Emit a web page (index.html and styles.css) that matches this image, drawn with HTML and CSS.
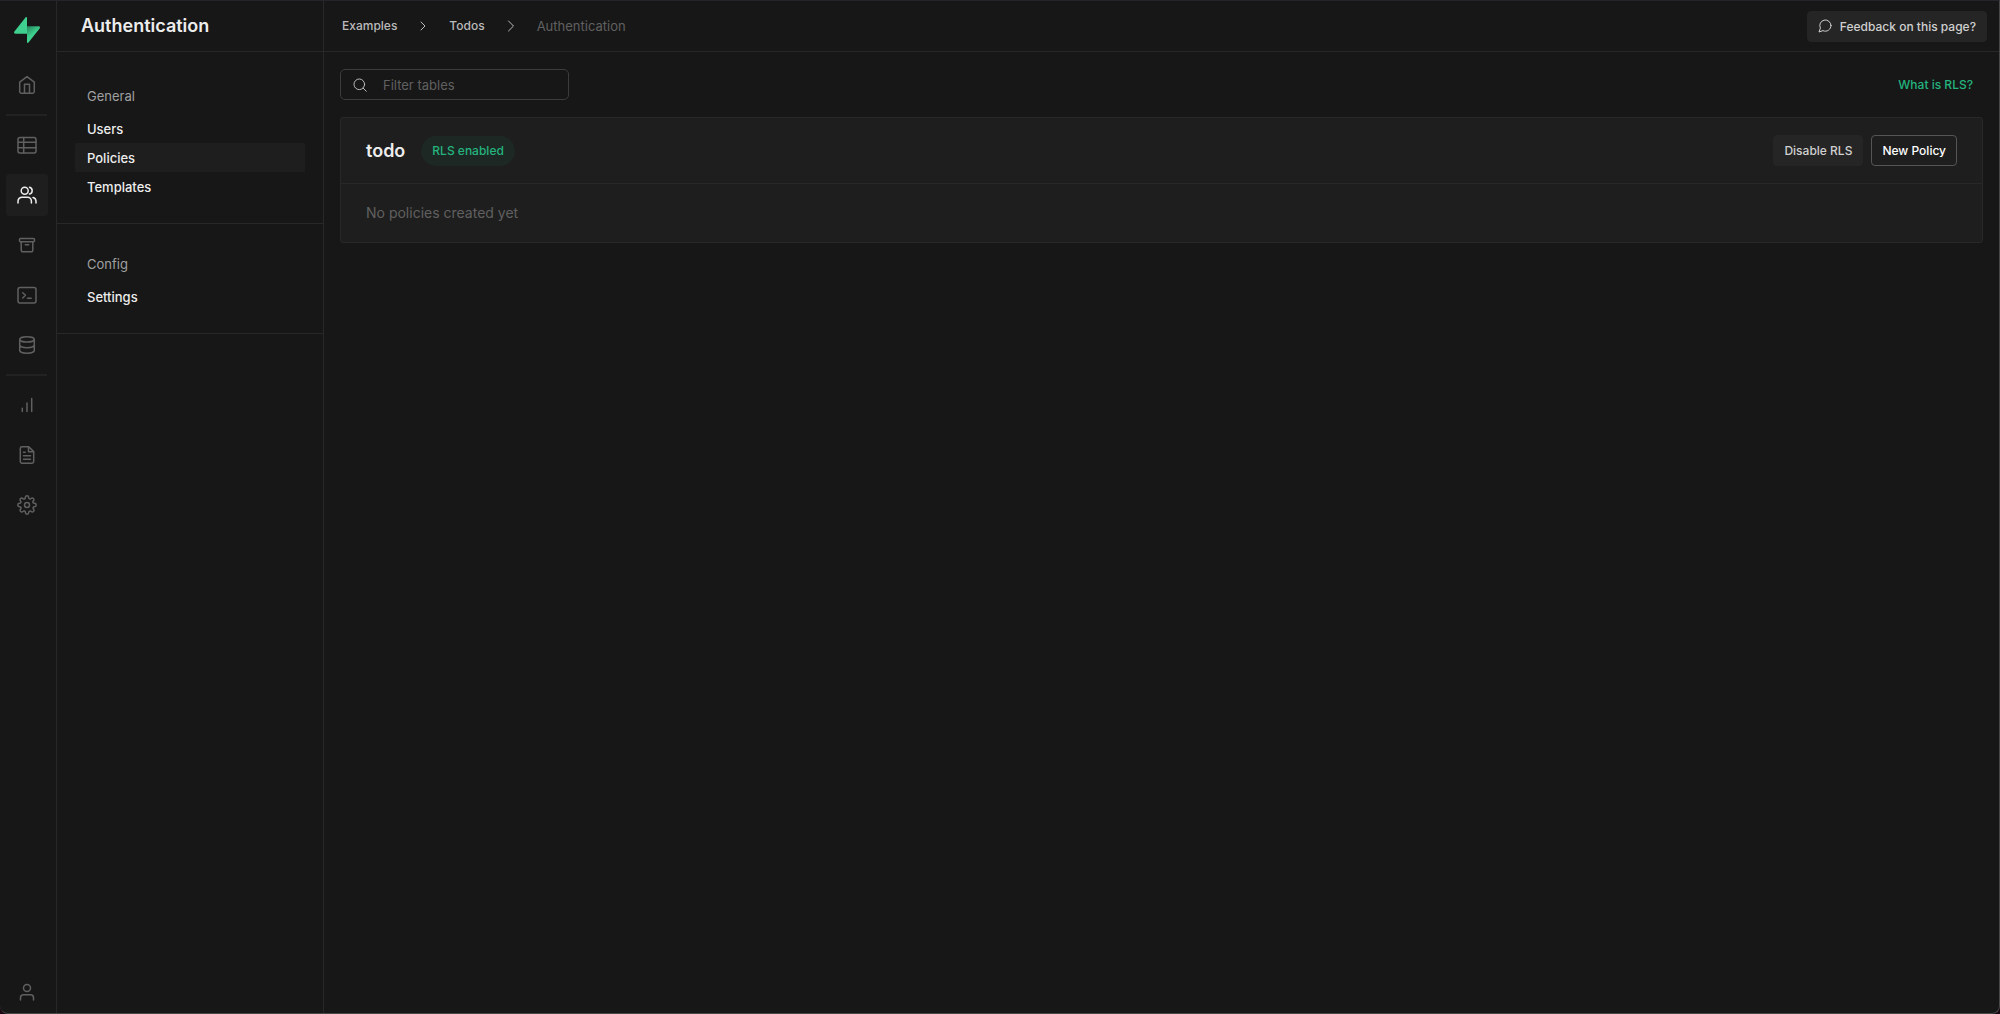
FILE: index.html
```html
<!DOCTYPE html>
<html lang="en">
<head>
  <meta charset="UTF-8" />
  <meta name="viewport" content="width=device-width, initial-scale=1" />
  <title>Authentication | Todos</title>
  <link rel="stylesheet" href="styles.css">
</head>
<body>
  <div class="app">

    <nav class="rail" aria-label="Project">
      <a href="#" class="rail-logo" aria-label="Dashboard">
        <svg viewBox="0 0 26 26" width="26" height="26">
          <defs>
            <linearGradient id="bolt" x1="13" y1="9" x2="19" y2="17" gradientUnits="userSpaceOnUse">
              <stop offset="0" stop-color="#248158" />
              <stop offset="1" stop-color="#3ecf8e" />
            </linearGradient>
          </defs>
          <path fill="#3fcf8e" d="M11.5.5C12.100-.2 13-.1 13 .8V16.700H1.300C.2 16.700-.3 15.500.4 14.600Z" />
          <path fill="url(#bolt)" d="M14.500 25.500C13.900 26.200 13 26 13 25.200V9.300H24.700C25.800 9.300 26.300 10.500 25.600 11.400Z" />
        </svg>
      </a>
      <a href="#" class="rail-link" aria-label="Home">
        <svg class="icon" viewBox="0 0 20 20"><path d="M2.700 7.200 10 1.700l7.300 5.500v9.300a1.700 1.700 0 0 1-1.700 1.700H4.400a1.700 1.700 0 0 1-1.700-1.700zM7.500 18V9.300h5V18" /></svg>
      </a>
      <hr class="rail-divider">
      <a href="#" class="rail-link" aria-label="Table editor">
        <svg class="icon" viewBox="0 0 20 20"><rect x="1" y="2.500" width="18" height="15.500" rx="2" /><path d="M1 7.300h18M1 12.700h18M6.700 2.500V18" /></svg>
      </a>
      <a href="#" class="rail-link active" aria-label="Authentication">
        <svg class="icon" viewBox="0 0 20 20"><circle cx="7.700" cy="5.700" r="3.500" /><path d="M1 18v-1.800a4 4 0 0 1 4-4h5.400a4 4 0 0 1 4 4V18M12.500 2.300a3.500 3.500 0 0 1 0 6.800M19 18v-1.800a4 4 0 0 0-3-3.800" /></svg>
      </a>
      <a href="#" class="rail-link" aria-label="Storage">
        <svg class="icon" viewBox="0 0 20 20"><rect x="2.500" y="3.500" width="15" height="3.300" rx="1" /><path d="M4.200 6.800v8.500a1.500 1.500 0 0 0 1.500 1.500h8.600a1.500 1.500 0 0 0 1.500-1.500V6.800M8.300 9.800h3.400" /></svg>
      </a>
      <a href="#" class="rail-link" aria-label="SQL editor">
        <svg class="icon" viewBox="0 0 20 20"><rect x="1" y="2.500" width="18" height="15.500" rx="2" /><path d="m5.700 7.700 2.800 2.600-2.800 2.700M10.500 13.300h3.700" /></svg>
      </a>
      <a href="#" class="rail-link" aria-label="Database">
        <svg class="icon" viewBox="0 0 20 20"><ellipse cx="10" cy="4.400" rx="7.300" ry="2.700" /><path d="M2.700 4.400v11.200c0 1.500 3.300 2.700 7.300 2.700s7.300-1.200 7.300-2.700V4.400M2.700 10c0 1.500 3.300 2.700 7.300 2.700s7.300-1.200 7.300-2.700" /></svg>
      </a>
      <hr class="rail-divider">
      <a href="#" class="rail-link" aria-label="Reports">
        <svg class="icon" viewBox="0 0 20 20"><path d="M5.300 16.500v-3.300M10 16.500V8M14.700 16.500v-13" /></svg>
      </a>
      <a href="#" class="rail-link" aria-label="API docs">
        <svg class="icon" viewBox="0 0 20 20"><path d="M11.800 1.700H5a1.700 1.700 0 0 0-1.700 1.700v13.200A1.700 1.700 0 0 0 5 18.300h10a1.700 1.700 0 0 0 1.700-1.700v-10zM11.500 2v4.800h5M6.500 7.300h1.700M6.500 10.800h7M6.500 14.200h7" /></svg>
      </a>
      <a href="#" class="rail-link" aria-label="Project settings">
        <svg class="icon icon-gear" viewBox="0 0 24 24"><circle cx="12" cy="12" r="3" /><path d="M19.400 15a1.650 1.650 0 0 0 .33 1.820l.06.06a2 2 0 1 1-2.830 2.830l-.06-.06a1.650 1.650 0 0 0-2.820 1.170V21a2 2 0 0 1-4 0v-.09A1.650 1.650 0 0 0 7.200 19.700l-.06.06a2 2 0 1 1-2.830-2.830l.06-.06A1.650 1.650 0 0 0 3.200 14H3a2 2 0 0 1 0-4h.09A1.650 1.650 0 0 0 4.300 7.200l-.06-.06a2 2 0 1 1 2.830-2.830l.06.06A1.650 1.650 0 0 0 10 3.200V3a2 2 0 0 1 4 0v.09a1.650 1.650 0 0 0 2.820 1.170l.06-.06a2 2 0 1 1 2.830 2.830l-.06.06A1.650 1.650 0 0 0 20.800 10H21a2 2 0 0 1 0 4h-.09a1.650 1.650 0 0 0-1.510 1z" /></svg>
      </a>
      <a href="#" class="rail-link rail-account" aria-label="Account">
        <svg class="icon" viewBox="0 0 20 20"><circle cx="10" cy="6" r="3.500" /><path d="M3.500 18v-2.200a3 3 0 0 1 3-3h7a3 3 0 0 1 3 3V18" /></svg>
      </a>
    </nav>

    <aside class="sidebar">
      <header class="sidebar-header">
        <h1>Authentication</h1>
      </header>
      <nav class="menu" aria-label="Authentication">
        <section class="menu-group">
          <h2>General</h2>
          <a href="#" class="menu-link">Users</a>
          <a href="#" class="menu-link active">Policies</a>
          <a href="#" class="menu-link">Templates</a>
        </section>
        <section class="menu-group">
          <h2>Config</h2>
          <a href="#" class="menu-link">Settings</a>
        </section>
      </nav>
    </aside>

    <div class="content">
      <header class="topbar">
        <nav class="breadcrumbs" aria-label="Breadcrumb">
          <a href="#">Examples</a>
          <svg class="chevron" viewBox="0 0 16 16"><path d="m6 4 4 4-4 4" /></svg>
          <a href="#">Todos</a>
          <svg class="chevron" viewBox="0 0 16 16"><path d="m5.500 3 5 5-5 5" /></svg>
          <span class="current">Authentication</span>
        </nav>
        <button type="button" class="btn">
          <svg viewBox="0 0 14 14" width="14" height="14"><path d="M13 6.600a5.500 5.500 0 0 1-8 5L1 13l1.400-3.900A5.600 5.600 0 1 1 13 6.600z" /></svg>
          Feedback on this page?
        </button>
      </header>

      <main class="page">
        <div class="toolbar">
          <label class="search">
            <svg viewBox="0 0 14 14" width="14" height="14"><circle cx="6.300" cy="6.300" r="5.300" /><path d="m10.200 10.200 3.100 3.100" /></svg>
            <input type="text" placeholder="Filter tables" aria-label="Filter tables">
          </label>
          <a href="#" class="help-link">What is RLS?</a>
        </div>

        <section class="card">
          <header class="card-header">
            <h2>todo</h2>
            <span class="badge">RLS enabled</span>
            <div class="card-actions">
              <button type="button" class="btn">Disable RLS</button>
              <button type="button" class="btn btn-outline">New Policy</button>
            </div>
          </header>
          <p class="card-empty">No policies created yet</p>
        </section>
      </main>
    </div>

  </div>
</body>
</html>
```

FILE: styles.css
```css
:root {
  --bg: #171717;
  --bg-panel: #1e1e1e;
  --bg-button: #252525;
  --border: #282828;
  --text: #ededed;
  --text-light: #a0a0a0;
  --text-muted: #606060;
  --green: #24b47e;
  --font-family: Inter, "Liberation Sans", sans-serif;
}

* { box-sizing: border-box; }

body {
  margin: 0;
  background-color: #1c0812;
  color: var(--text);
  font-family: var(--font-family);
  font-size: 13px;
  line-height: 20px;
}

h1, h2, p {
  margin: 0;
  font-weight: 600;
}

a {
  color: inherit;
  text-decoration: none;
}

svg {
  flex: none;
  fill: none;
  stroke: currentColor;
  stroke-linecap: round;
  stroke-linejoin: round;
}

.app {
  display: flex;
  min-height: 100vh;
  background-color: var(--bg);
  border: 1px solid #484848;
  border-top-color: #24242c;
  border-left: none;
  border-radius: 0 0 8px 8px;
}

/* icon rail */
.rail {
  display: flex;
  flex-direction: column;
  gap: 8px;
  width: 57px;
  padding: 0 8px 0 6px;
  border-right: 1px solid var(--border);
}

.rail-logo {
  display: flex;
  justify-content: center;
  align-items: end;
  width: 42px;
  height: 42px;
  margin-bottom: 13px;
}

.rail-logo svg { stroke: none; }

.rail-link {
  display: flex;
  justify-content: center;
  align-items: center;
  width: 42px;
  height: 42px;
  border-radius: 4px;
  color: #606060;
}

.rail-link.active {
  background-color: var(--bg-panel);
  color: var(--text);
}

.rail-divider {
  width: 41px;
  height: 2px;
  margin: 0;
  border: none;
  background-color: #222;
}

.rail-account { margin-top: auto; }

.icon {
  width: 20px;
  height: 20px;
  stroke-width: 1.5;
}

.icon-gear { stroke-width: 1.8; }

/* section menu */
.sidebar {
  width: 267px;
  border-right: 1px solid var(--border);
}

.sidebar-header,
.topbar {
  display: flex;
  align-items: center;
  height: 51px;
  border-bottom: 1px solid var(--border);
}

.sidebar-header { padding: 0 24px; }

.sidebar-header h1 { font-size: 18px; }

.menu { padding-top: 4px; }

.menu-group {
  padding: 30px 18px 22px;
  border-bottom: 1px solid var(--border);
}

.menu-group h2 {
  margin-bottom: 8px;
  padding: 0 12px;
  color: var(--text-light);
  font-size: 13px;
  font-weight: 400;
}

.menu-link {
  display: flex;
  align-items: center;
  height: 29px;
  padding: 0 12px;
  border-radius: 2px;
  font-weight: 500;
}

.menu-link.active { background-color: var(--bg-panel); }

/* main column */
.content { flex: 1; }

.topbar {
  justify-content: space-between;
  padding: 0 12px 0 18px;
}

.breadcrumbs {
  display: flex;
  align-items: center;
  gap: 18px;
  color: #bbb;
  font-size: 12px;
  font-weight: 500;
}

.breadcrumbs .current {
  color: var(--text-muted);
  font-size: 13px;
  font-weight: 400;
}

.chevron {
  width: 16px;
  height: 16px;
}

.btn {
  display: flex;
  align-items: center;
  gap: 8px;
  height: 31px;
  padding: 0 10px;
  border: 1px solid var(--bg-button);
  border-radius: 4px;
  background-color: var(--bg-button);
  color: #d0d0d0;
  font: 500 12px var(--font-family);
}

.btn-outline {
  border-color: #555;
  background-color: transparent;
  color: #fff;
}

.page { padding: 17px 16px; }

.toolbar {
  display: flex;
  justify-content: space-between;
  align-items: center;
  margin-bottom: 17px;
  padding-right: 10px;
}

.search {
  display: flex;
  align-items: center;
  gap: 16px;
  width: 229px;
  height: 31px;
  padding: 0 12px;
  border: 1px solid #3c3c3c;
  border-radius: 5px;
  color: #bbb;
}

.search input {
  width: 100%;
  padding: 0;
  border: none;
  outline: none;
  background: none;
  color: var(--text);
  font: 400 13px var(--font-family);
}

.search input::placeholder { color: var(--text-muted); }

.help-link {
  color: var(--green);
  font-size: 12px;
  font-weight: 500;
}

.card {
  border: 1px solid var(--border);
  border-radius: 3px;
  background-color: var(--bg-panel);
}

.card-header {
  display: flex;
  align-items: center;
  height: 66px;
  padding: 0 25px;
  border-bottom: 1px solid var(--border);
}

.card-header h2 { font-size: 18px; }

.badge {
  margin-left: 16px;
  padding: 5px 11px;
  border-radius: 15px;
  background-color: #1d2824;
  color: var(--green);
  font-size: 12px;
  font-weight: 500;
}

.card-actions {
  display: flex;
  gap: 8px;
  margin-left: auto;
}

.card-empty {
  padding: 19px 25px;
  color: var(--text-muted);
  font-size: 14px;
  font-weight: 400;
}
```
